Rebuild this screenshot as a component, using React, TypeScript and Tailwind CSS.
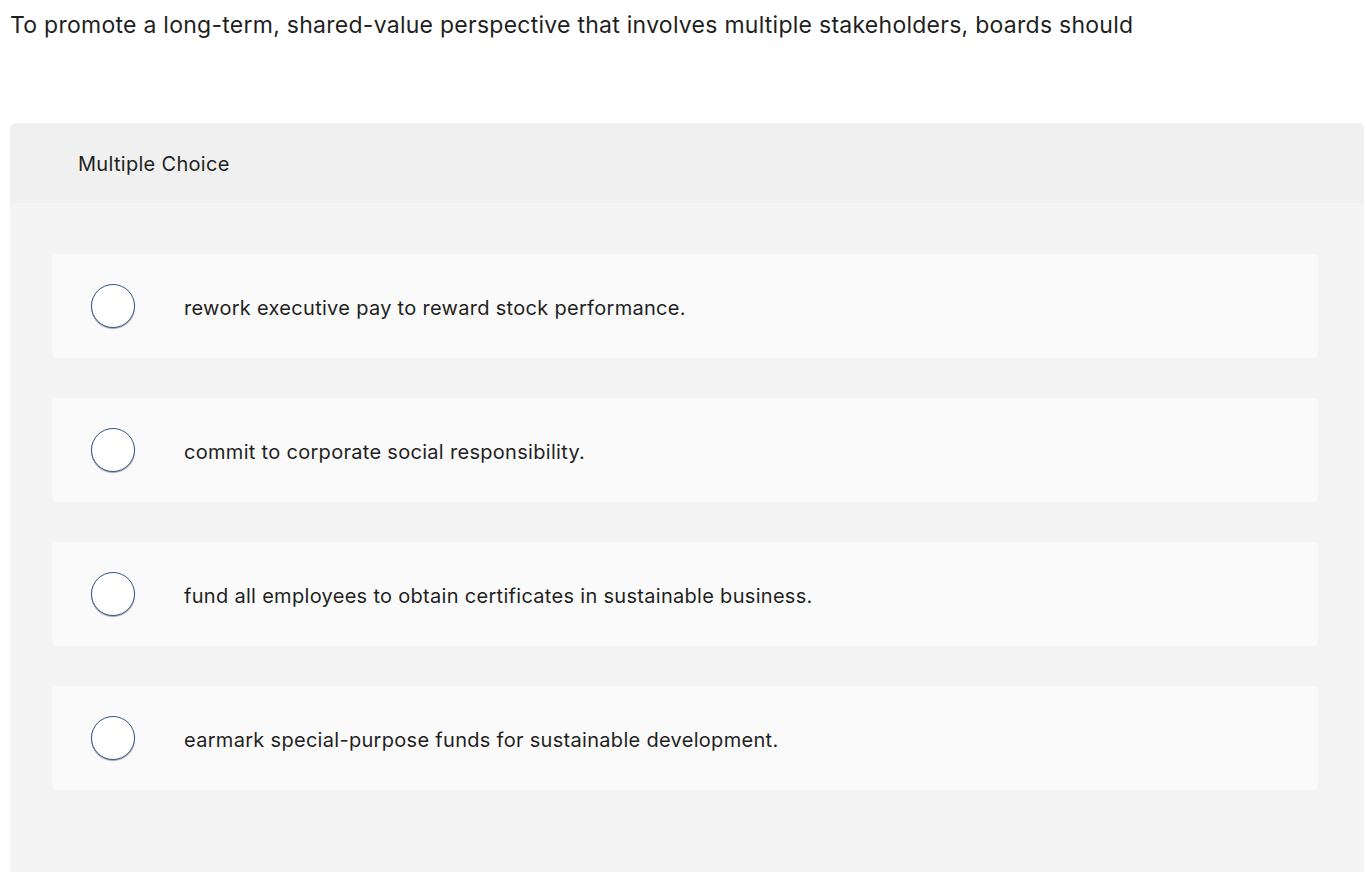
import React from "react";

const options = [
  "rework executive pay to reward stock performance.",
  "commit to corporate social responsibility.",
  "fund all employees to obtain certificates in sustainable business.",
  "earmark special-purpose funds for sustainable development.",
];

export default function App() {
  return (
    <div
      className="min-h-[872px] bg-white text-[#1f1f1f]"
      style={{ fontFamily: "Inter, 'Liberation Sans', sans-serif" }}
    >
      <div className="px-[10px] pt-[10px] text-[23px] leading-[30px] tracking-[0.26px]">
        To promote a long-term, shared-value perspective that involves multiple stakeholders, boards should
      </div>
      <div className="ml-[10px] mr-[2px] mt-[83px] rounded-t-[6px] overflow-hidden bg-[#f4f4f4] min-h-[749px]">
        <div className="h-[80px] bg-[#f0f0f0] flex items-center pl-[68px] pt-[2px] text-[20px] tracking-[0.3px]">
          Multiple Choice
        </div>
        <div className="pl-[42px] pr-[46px] pt-[51px] flex flex-col gap-[40px]">
          {options.map((o) => (
            <div
              key={o}
              className="h-[104px] rounded-[5px] bg-[#fafafa] flex items-center pl-[39px]"
            >
              <div className="w-[44px] h-[44px] rounded-full bg-white border-[1.5px] border-[#34588c] shadow-[0_1px_1px_rgba(0,0,0,0.35)] shrink-0" />
              <div className="ml-[49px] pt-[3px] text-[20px] tracking-[0.3px]">{o}</div>
            </div>
          ))}
        </div>
      </div>
    </div>
  );
}
